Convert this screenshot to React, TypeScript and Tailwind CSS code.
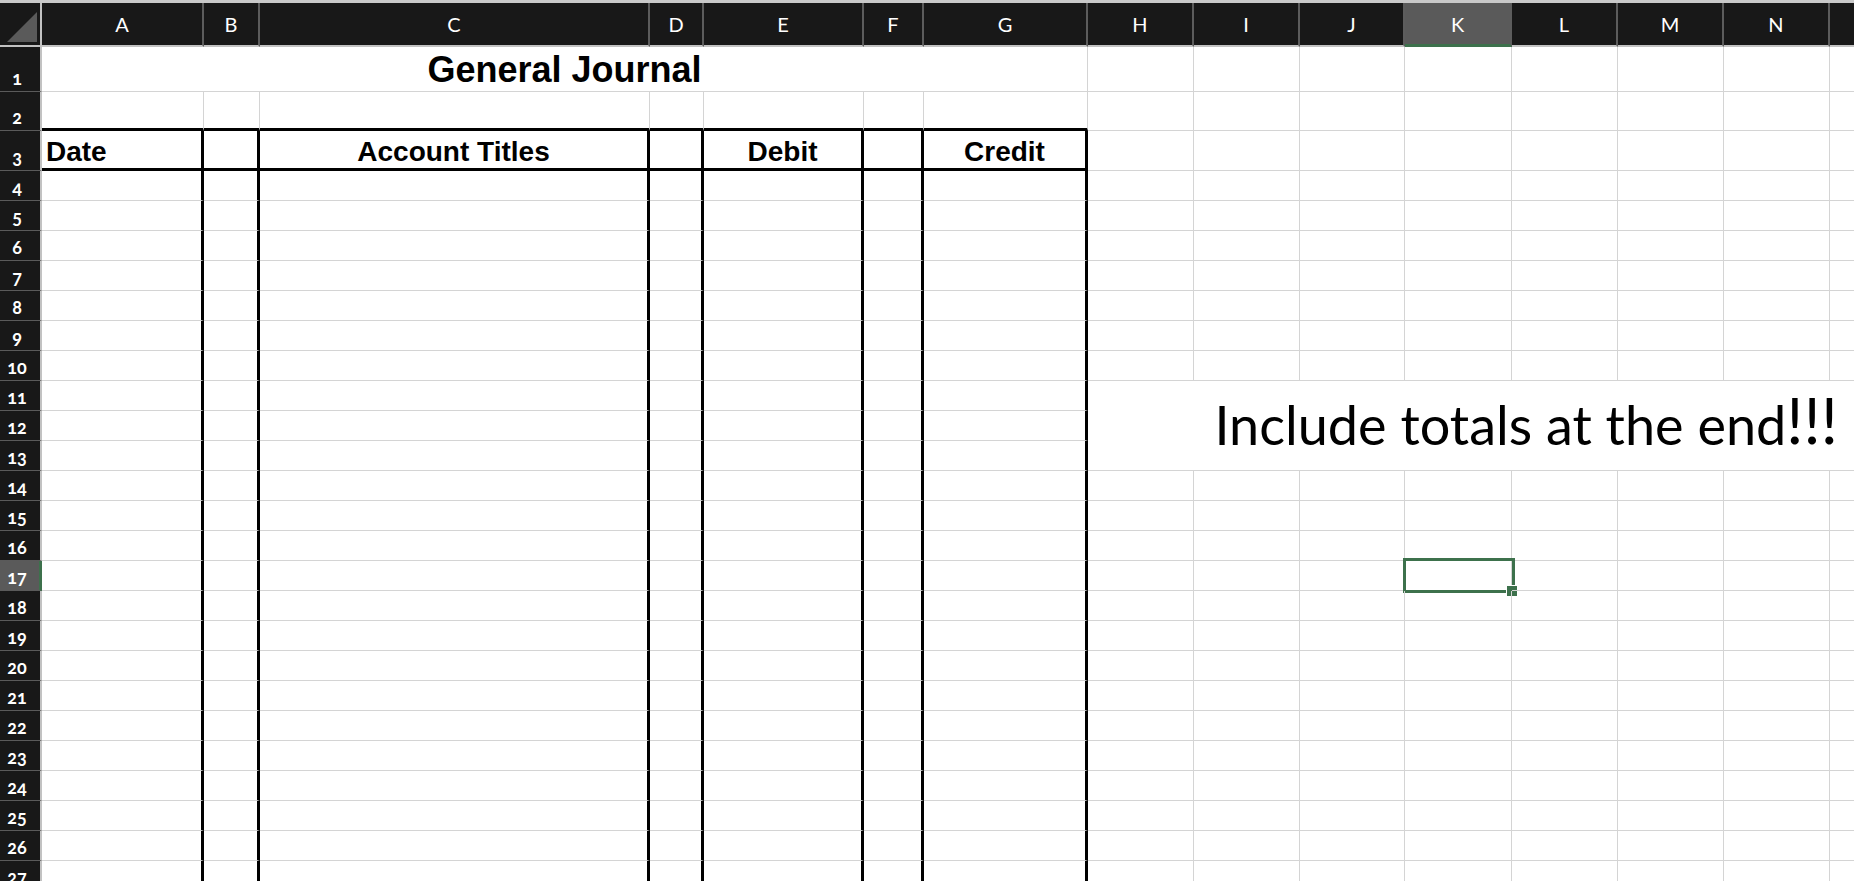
import type { ReactNode } from "react";

const COLS = ["A", "B", "C", "D", "E", "F", "G", "H", "I", "J", "K", "L", "M", "N", "O"];

// cell border presets
const LINE = "border-r border-b border-r-[#d4d4d4] border-b-[#d4d4d4]";
const ROW2 = "border-r border-r-[#d4d4d4] border-b-[3px] border-b-black";
const ROW3 = "border-r-[3px] border-r-black border-b-[3px] border-b-black";
const BODY = "border-r-[3px] border-r-black border-b border-b-[#d4d4d4]";

const HEADINGS: Record<number, string> = { 0: "Date", 2: "Account Titles", 4: "Debit", 6: "Credit" };

function cellClass(row: number, col: number) {
  if (col > 6) return LINE;
  if (row === 2) return ROW2;
  if (row === 3) return ROW3;
  return BODY;
}

function RowHead({ n }: { n: number }) {
  const active = n === 17;
  return (
    <div
      className={
        active
          ? "flex items-end justify-center border-r-[3px] border-b border-r-[#3d714c] border-b-[#5a5a5a] bg-[#5a5a5a] pr-[5px] pb-[4px]"
          : "flex items-end justify-center border-r-2 border-b border-r-[#c2c2c2] border-b-[#5a5a5a] bg-[#181818] pr-[6px] pb-[4px]"
      }
    >
      <span className="text-[18px] font-bold leading-none text-white oldstyle-nums">{n}</span>
    </div>
  );
}

function Cell({ row, col, children }: { row: number; col: number; children?: ReactNode }) {
  const selected = row === 17 && col === 10;
  return (
    <div className={`relative ${cellClass(row, col)}`}>
      {children}
      {selected && (
        <>
          <div className="absolute -top-[3px] -left-[2px] h-[35px] w-[112px] border-[3px] border-[#3d714c]" />
          <div className="absolute top-[24px] left-[101px] size-[12px] border border-white bg-[#3d714c]" />
        </>
      )}
    </div>
  );
}

function Heading({ text, left }: { text: string; left?: boolean }) {
  return (
    <div
      className={`flex h-full items-end pb-[2px] font-['Liberation_Sans',Arial,sans-serif] text-[28px] font-bold leading-none whitespace-nowrap text-black ${
        left ? "justify-start pl-[4px]" : "justify-center"
      }`}
    >
      {text}
    </div>
  );
}

function rowCells(r: number) {
  const out: ReactNode[] = [<RowHead key={`h${r}`} n={r} />];
  if (r === 1) {
    out.push(
      <div
        key="title"
        className="col-span-7 flex items-end justify-center border-r border-b border-[#d4d4d4] pb-[3px] font-['Liberation_Sans',Arial,sans-serif] text-[36px] font-bold leading-none text-black"
      >
        General Journal
      </div>,
    );
    for (let c = 7; c < COLS.length; c++) out.push(<Cell key={`${r}-${c}`} row={r} col={c} />);
    return out;
  }
  for (let c = 0; c < 7; c++) {
    out.push(
      <Cell key={`${r}-${c}`} row={r} col={c}>
        {r === 3 && HEADINGS[c] && <Heading text={HEADINGS[c]} left={c === 0} />}
      </Cell>,
    );
  }
  if (r === 11) {
    out.push(
      <div
        key="note"
        className="col-span-8 row-span-3 flex items-end justify-end border-b border-[#d4d4d4] pr-[98px] pb-[18px] font-[Lato,sans-serif] text-[54px] leading-none whitespace-nowrap text-black"
      >
        Include totals at the end<span className="text-[64px]">!!!</span>
      </div>,
    );
    return out;
  }
  if (r === 12 || r === 13) return out;
  for (let c = 7; c < COLS.length; c++) out.push(<Cell key={`${r}-${c}`} row={r} col={c} />);
  return out;
}

export default function App() {
  const rows = Array.from({ length: 27 }, (_, i) => i + 1);
  return (
    <div className="h-[881px] w-full overflow-hidden bg-white font-[Lato,sans-serif]">
      <div className="h-[3px] bg-[#c9c9c9]" />
      <div className="grid w-max auto-rows-[30px] grid-cols-[42px_162px_56px_390px_54px_160px_60px_164px_106px_106px_105px_107px_106px_106px_106px_106px] grid-rows-[44px_45px_39px_40px]">
        <div className="border-r-2 border-b-2 border-[#c2c2c2] bg-[#181818]">
          <svg width="40" height="42" viewBox="0 0 40 42" className="block">
            <polygon points="7,39 37,39 37,9" fill="#5a5a5a" />
          </svg>
        </div>
        {COLS.map((c) => (
          <div
            key={c}
            className={
              c === "K"
                ? "flex items-center justify-center border-r-2 border-b-[3px] border-r-[#5c5c5c] border-b-[#3d714c] bg-[#5a5a5a] pt-[1px] text-[20px] text-white"
                : "flex items-center justify-center border-r-2 border-b-2 border-r-[#5c5c5c] border-b-[#c2c2c2] bg-[#181818] text-[20px] text-white"
            }
          >
            {c}
          </div>
        ))}
        {rows.map((r) => rowCells(r))}
      </div>
    </div>
  );
}
